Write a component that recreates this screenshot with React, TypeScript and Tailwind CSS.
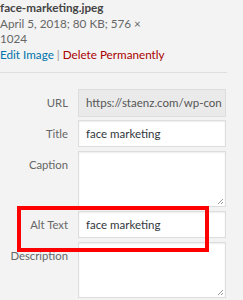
import React from "react";

function Resize() {
  return (
    <svg className="absolute right-[2px] bottom-[2px]" width="8" height="8" viewBox="0 0 8 8">
      <path d="M7 2 L2 7 M7 5 L5 7" stroke="#999" strokeWidth="1" />
    </svg>
  );
}

function Row({ label, children, h, mt }: { label: string; children: React.ReactNode; h: string; mt: string }) {
  return (
    <div className={`flex ${mt}`}>
      <div className="w-[68px] text-right text-[11.3px] leading-[15px] text-[#666] pt-[6px] shrink-0">{label}</div>
      <div className={`ml-[10px] w-[148px] ${h} relative`}>{children}</div>
    </div>
  );
}

export default function App() {
  return (
    <div className="w-[243px] h-[300px] bg-[#f3f3f3] relative overflow-hidden" style={{ fontFamily: 'Lato, sans-serif' }}>
      <div className="text-[11.7px] text-[#666]">
        <div className="leading-[15.5px] font-bold text-[#444]">face-marketing.jpeg</div>
        <div className="leading-[15.5px]">April 5, 2018; 80 KB; 576 ×</div>
        <div className="leading-[15.5px]">1024</div>
        <div className="leading-[15.5px]">
          <span className="text-[#0073aa]">Edit Image</span>
          <span className="text-[#999]"> | </span>
          <span className="text-[#a00]">Delete Permanently</span>
        </div>
      </div>
      <div className="mt-[10px] w-[227px] h-px bg-[#dedede]" />
      <div className="mt-[16px]">
        <Row label="URL" h="h-[28px]" mt="mt-0">
          <div className="h-full border border-[#ddd] bg-[#eaeaea] px-[7px] text-[11.5px] leading-[26px] text-[#555] whitespace-nowrap overflow-hidden">
            https://staenz.com/wp-con
          </div>
        </Row>
        <Row label="Title" h="h-[27px]" mt="mt-[3px]">
          <div className="h-full border border-[#ddd] bg-white px-[7px] text-[11.5px] leading-[25px] text-[#32373c] whitespace-nowrap overflow-hidden shadow-[inset_0_1px_2px_rgba(0,0,0,0.07)]">
            face marketing
          </div>
        </Row>
        <Row label="Caption" h="h-[56px]" mt="mt-[4px]">
          <div className="h-full border border-[#ddd] bg-white shadow-[inset_0_1px_2px_rgba(0,0,0,0.07)]" />
          <Resize />
        </Row>
        <Row label="Alt Text" h="h-[27px]" mt="mt-[4px]">
          <div className="h-full border border-[#ddd] bg-white px-[7px] text-[11.5px] leading-[25px] text-[#32373c] whitespace-nowrap overflow-hidden shadow-[inset_0_1px_2px_rgba(0,0,0,0.07)]">
            face marketing
          </div>
        </Row>
        <Row label="Description" h="h-[56px]" mt="mt-[4px]">
          <div className="h-full border border-[#ddd] bg-white shadow-[inset_0_1px_2px_rgba(0,0,0,0.07)]" />
          <Resize />
        </Row>
      </div>
      <div className="absolute left-[17px] top-[206px] w-[192px] h-[46px] border-[4px] border-[#ff0000]" />
    </div>
  );
}
